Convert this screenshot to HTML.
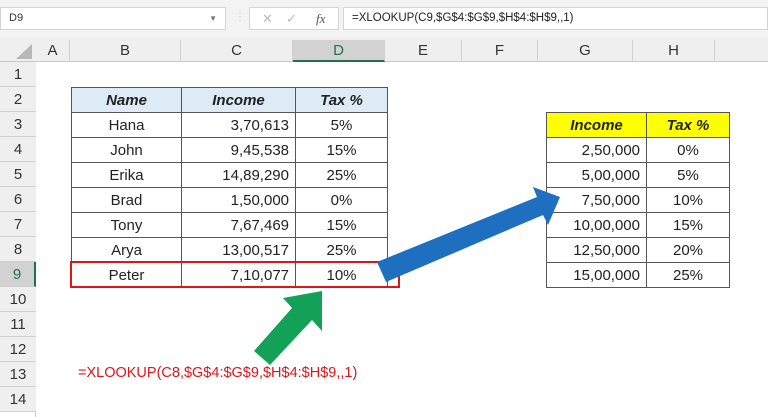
<!DOCTYPE html>
<html><head><style>
body{margin:0;width:768px;height:417px;overflow:hidden;background:#fff;font-family:"Liberation Sans",sans-serif;position:relative}
.a{position:absolute;box-sizing:border-box}
.t{position:absolute;border-collapse:collapse;font-size:15px;color:#222}
.t td{border:1px solid #555;height:25px;padding:0 6px;box-sizing:border-box}
.c{text-align:center}.r{text-align:right}
.h td{font-weight:bold;font-style:italic;text-align:center}
.ch{position:absolute;top:40px;height:22px;line-height:22px;text-align:center;font-size:15px;color:#333;border-right:1px solid #d0d0d0;box-sizing:border-box}
.rh{position:absolute;left:0;width:36px;height:25px;line-height:25px;text-align:center;font-size:15px;color:#333;border-bottom:1px solid #d0d0d0;box-sizing:border-box;background:#efefef}
</style></head><body>
<div class="a" style="left:0;top:0;width:768px;height:38px;background:#f3f3f3"></div>
<div class="a" style="left:0;top:7px;width:226px;height:23px;background:#fff;border:1px solid #d4d4d4;font-size:11px;line-height:21px;padding-left:8px;color:#333">D9<span style="position:absolute;right:8px;top:0;font-size:8px;color:#777">▼</span></div>
<div class="a" style="left:235px;top:12px;color:#bbb;font-size:10px">⋮</div>
<div class="a" style="left:249px;top:7px;width:90px;height:23px;background:#fff;border:1px solid #d4d4d4;font-size:13px;line-height:21px;color:#bbb"><span style="position:absolute;left:12px">✕</span><span style="position:absolute;left:36px">✓</span><span style="position:absolute;left:66px;color:#555;font-style:italic;font-family:'Liberation Serif',serif">fx</span></div>
<div class="a" style="left:343px;top:7px;width:425px;height:23px;background:#fff;border:1px solid #d4d4d4;font-size:11.5px;line-height:21px;padding-left:8px;color:#222">=XLOOKUP(C9,$G$4:$G$9,$H$4:$H$9,,1)</div>
<div class="a" style="left:0;top:38px;width:768px;height:24px;background:#efefef;border-bottom:1px solid #c8c8c8"></div>
<svg class="a" style="left:12px;top:42px" width="22" height="18"><polygon points="20,2 20,17 4,17" fill="#b8b8b8"/></svg>
<div class="ch" style="left:36px;width:34px">A</div>
<div class="ch" style="left:70px;width:111px">B</div>
<div class="ch" style="left:181px;width:112px">C</div>
<div class="ch" style="left:293px;width:92px;background:#d2d2d2;border-bottom:2px solid #217346;color:#217346">D</div>
<div class="ch" style="left:385px;width:77px">E</div>
<div class="ch" style="left:462px;width:76px">F</div>
<div class="ch" style="left:538px;width:95px">G</div>
<div class="ch" style="left:633px;width:82px">H</div>
<div class="a" style="left:35px;top:62px;width:1px;height:355px;background:#c8c8c8"></div>
<div class="rh" style="top:62px">1</div><div class="rh" style="top:87px">2</div><div class="rh" style="top:112px">3</div><div class="rh" style="top:137px">4</div><div class="rh" style="top:162px">5</div><div class="rh" style="top:187px">6</div><div class="rh" style="top:212px">7</div><div class="rh" style="top:237px">8</div><div class="rh" style="top:262px;background:#d2d2d2;color:#217346;border-right:2px solid #217346">9</div><div class="rh" style="top:287px">10</div><div class="rh" style="top:312px">11</div><div class="rh" style="top:337px">12</div><div class="rh" style="top:362px">13</div><div class="rh" style="top:387px">14</div>
<table class="t" style="left:71px;top:87px;width:317px">
<tr class="h" style="background:#ddebf7"><td style="width:110px">Name</td><td style="width:114px">Income</td><td>Tax %</td></tr>
<tr><td class="c">Hana</td><td class="r">3,70,613</td><td class="c">5%</td></tr>
<tr><td class="c">John</td><td class="r">9,45,538</td><td class="c">15%</td></tr>
<tr><td class="c">Erika</td><td class="r">14,89,290</td><td class="c">25%</td></tr>
<tr><td class="c">Brad</td><td class="r">1,50,000</td><td class="c">0%</td></tr>
<tr><td class="c">Tony</td><td class="r">7,67,469</td><td class="c">15%</td></tr>
<tr><td class="c">Arya</td><td class="r">13,00,517</td><td class="c">25%</td></tr>
<tr><td class="c">Peter</td><td class="r">7,10,077</td><td class="c">10%</td></tr>
</table>
<div class="a" style="left:70px;top:261px;width:330px;height:27px;border:2px solid #e0141a"></div>
<table class="t" style="left:546px;top:112px;width:184px">
<tr class="h" style="background:#ffff00"><td style="width:100px">Income</td><td>Tax %</td></tr>
<tr><td class="r">2,50,000</td><td class="c">0%</td></tr>
<tr><td class="r">5,00,000</td><td class="c">5%</td></tr>
<tr><td class="r">7,50,000</td><td class="c">10%</td></tr>
<tr><td class="r">10,00,000</td><td class="c">15%</td></tr>
<tr><td class="r">12,50,000</td><td class="c">20%</td></tr>
<tr><td class="r">15,00,000</td><td class="c">25%</td></tr>
</table>
<svg class="a" style="left:0;top:0" width="768" height="417">
<polygon points="377,262 537,197 533,187 560,197 548,225 543,215 386,282" fill="#1f6fc1"/>
<polygon points="254,351 292,308 283,298 322,291 322,331 312,320 270,365" fill="#13a158"/>
</svg>
<div class="a" style="left:78px;top:365px;font-size:14.5px;color:#e0141a">=XLOOKUP(C8,$G$4:$G$9,$H$4:$H$9,,1)</div>
</body></html>
